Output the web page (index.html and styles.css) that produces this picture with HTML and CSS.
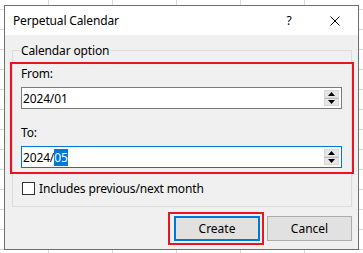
FILE: index.html
```html
<!DOCTYPE html>
<html lang="en">
  <head>
    <meta charset="UTF-8" />
    <title>Perpetual Calendar</title>
    <link rel="stylesheet" href="styles.css">
  </head>
  <body>
    <div class="dialog">
      <div class="titlebar">
        <span class="title">Perpetual Calendar</span>
        <span class="title-btn">?</span>
        <span class="title-btn">
          <svg width="10" height="10" viewBox="0 0 10 10">
            <path d="M0.5 0.5 L9.5 9.5 M9.5 0.5 L0.5 9.5" stroke="#000" stroke-width="1" fill="none" />
          </svg>
        </span>
      </div>
      <div class="body">
        <fieldset class="group">
          <legend>Calendar option</legend>
          <div class="mark">
            <label class="field-label">From:</label>
            <div class="field">
              <span>2024/01</span>
              <div class="spin">
                <span class="spin-btn"><svg width="7" height="4" viewBox="0 0 7 4"><polygon points="3.5,0 7,4 0,4" fill="#000" /></svg></span>
                <span class="spin-btn"><svg width="7" height="4" viewBox="0 0 7 4"><polygon points="0,0 7,0 3.5,4" fill="#000" /></svg></span>
              </div>
            </div>
            <label class="field-label label-to">To:</label>
            <div class="field focus">
              <span>2024/<span class="sel">05</span></span>
              <div class="spin">
                <span class="spin-btn"><svg width="7" height="4" viewBox="0 0 7 4"><polygon points="3.5,0 7,4 0,4" fill="#000" /></svg></span>
                <span class="spin-btn"><svg width="7" height="4" viewBox="0 0 7 4"><polygon points="0,0 7,0 3.5,4" fill="#000" /></svg></span>
              </div>
            </div>
          </div>
          <label class="check"><span class="box"></span>Includes previous/next month</label>
        </fieldset>
        <div class="buttons">
          <span class="marked"><button class="btn default">Create</button></span>
          <button class="btn">Cancel</button>
        </div>
      </div>
    </div>
  </body>
</html>
```

FILE: styles.css
```css
body {
  margin: 0;
  width: 363px;
  height: 253px;
  position: relative;
  overflow: hidden;
  background-color: #fff;
  background-image: linear-gradient(#d9d9d9 1px, transparent 1px),
    linear-gradient(90deg, #d9d9d9 1px, transparent 1px);
  background-size: 100% 20px, 64px 100%;
  background-position: 0 9px, 48px 0;
  font-family: "Noto Sans", sans-serif;
  font-size: 12px;
  line-height: 15px;
  letter-spacing: -0.15px;
  color: #000;
}
.dialog {
  position: absolute;
  left: 4px;
  top: 5px;
  width: 355px;
  height: 245px;
  box-sizing: border-box;
  border: 1px solid #6f6f6f;
  background: #f0f0f0;
  display: flex;
  flex-direction: column;
}
.titlebar {
  height: 29px;
  flex-shrink: 0;
  background: #fff;
  display: flex;
  align-items: center;
  padding-left: 8px;
}
.title {
  flex: 1;
}
.title-btn {
  width: 46px;
  height: 29px;
  display: flex;
  align-items: center;
  justify-content: center;
}
.body {
  padding: 0 6px 0 7px;
}
.group {
  margin: 8px 0 0;
  padding: 0;
  min-width: 0;
  border: 1px solid #dcdcdc;
}
.group legend {
  margin-left: 7px;
  padding: 0 1px;
  line-height: 15px;
}
.mark {
  margin: 4px -3px 0 -3px;
  border: 2px solid #e8141f;
  padding: 2px 10px 4px 9px;
}
.field-label {
  display: block;
}
.label-to {
  margin-top: 16px;
}
.field {
  margin-top: 6px;
  height: 22px;
  box-sizing: border-box;
  border: 1px solid #7a7a7a;
  background: #fff;
  display: flex;
  align-items: center;
  padding-left: 1px;
}
.field.focus {
  border-color: #0078d7;
}
.sel {
  background: #0078d7;
  color: #fff;
}
.spin {
  margin-left: auto;
  margin-right: 2px;
  width: 15px;
  height: 16px;
  display: flex;
  flex-direction: column;
}
.spin-btn {
  flex: 1;
  box-sizing: border-box;
  background: #e6e6e6;
  border: 1px solid #d9d9d9;
  display: flex;
  align-items: center;
  justify-content: center;
}
.spin-btn + .spin-btn {
  border-top-color: #bdbdbd;
}
.check {
  display: flex;
  align-items: center;
  gap: 4px;
  height: 15px;
  margin: 7px 0 10px 9px;
}
.box {
  width: 13px;
  height: 13px;
  box-sizing: border-box;
  border: 1px solid #333;
  background: #fff;
}
.buttons {
  display: flex;
  justify-content: flex-end;
  gap: 7px;
  margin-top: 9px;
}
.btn {
  width: 85px;
  height: 25px;
  box-sizing: border-box;
  border: 1px solid #adadad;
  background: #e1e1e1;
  font: inherit;
  color: #000;
  padding: 0;
}
.btn.default {
  width: 86px;
  border: 2px solid #0078d7;
}
.marked {
  position: relative;
  display: flex;
}
.marked::after {
  content: "";
  position: absolute;
  left: -6px;
  right: -4px;
  top: -4px;
  bottom: -4px;
  border: 2px solid #e8141f;
}
```
